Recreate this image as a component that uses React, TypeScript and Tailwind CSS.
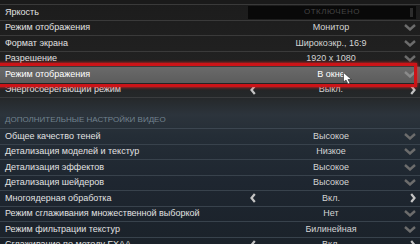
import React from "react";

type Ctrl = "down" | "lr" | "none";
type RowT = { label: string; value: string; ctrl: Ctrl };

const top: RowT[] = [
  { label: "Режим отображения", value: "Монитор", ctrl: "down" },
  { label: "Формат экрана", value: "Широкоэкр., 16:9", ctrl: "down" },
  { label: "Разрешение", value: "1920 x 1080", ctrl: "down" },
];

const bottom: RowT[] = [
  { label: "Общее качество теней", value: "Высокое", ctrl: "down" },
  { label: "Детализация моделей и текстур", value: "Низкое", ctrl: "down" },
  { label: "Детализация эффектов", value: "Высокое", ctrl: "down" },
  { label: "Детализация шейдеров", value: "Высокое", ctrl: "down" },
  { label: "Многоядерная обработка", value: "Вкл.", ctrl: "lr" },
  { label: "Режим сглаживания множественной выборкой", value: "Нет", ctrl: "down" },
  { label: "Режим фильтрации текстур", value: "Билинейная", ctrl: "down" },
  { label: "Сглаживание по методу FXAA", value: "Вкл.", ctrl: "lr" },
];

const font = { fontFamily: '"Liberation Sans", Arial, sans-serif' };

function Down({ color = "#6c6c6c" }: { color?: string }) {
  return (
    <svg width="12" height="7" viewBox="0 0 12 7">
      <polyline points="1,1 6,5.5 11,1" fill="none" stroke={color} strokeWidth="2.4" />
    </svg>
  );
}

function Left() {
  return (
    <svg width="6" height="10" viewBox="0 0 6 10">
      <polyline points="4.8,1 1.5,5 4.8,9" fill="none" stroke="#c4c4c4" strokeWidth="2.2" />
    </svg>
  );
}

function Right() {
  return (
    <svg width="6" height="10" viewBox="0 0 6 10">
      <polyline points="1.2,1 4.5,5 1.2,9" fill="none" stroke="#c4c4c4" strokeWidth="2.2" />
    </svg>
  );
}

function Value({ value, ctrl, chevColor }: { value: string; ctrl: Ctrl; chevColor?: string }) {
  return (
    <div className="w-[170px] h-full grid grid-cols-[12px_1fr_12px] items-center">
      <div className="flex items-center justify-start pl-[4px]">{ctrl === "lr" ? <Left /> : null}</div>
      <div className="text-center text-[9px] text-[#d4d4d4] whitespace-nowrap leading-none">{value}</div>
      <div className="flex items-center justify-end">
        {ctrl === "down" ? <Down color={chevColor} /> : ctrl === "lr" ? <Right /> : null}
      </div>
    </div>
  );
}

function Row({ r, line }: { r: RowT; line: string }) {
  return (
    <div className={`flex h-[15.5px] items-center border-b ${line} pr-[4px]`}>
      <div className="flex-1 pl-[5px] text-[9px] text-[#e2e2e2] whitespace-nowrap leading-none">{r.label}</div>
      <Value value={r.value} ctrl={r.ctrl} />
    </div>
  );
}

export default function App() {
  return (
    <div
      className="relative w-[420px] h-[244px] overflow-hidden bg-[linear-gradient(to_bottom,#1c1c1c_0%,#222222_30%,#25282a_40%,#2c343c_47%,#242d36_56%,#1e2630_75%,#1b222a_100%)]"
      style={font}
    >
      <div className="h-[5px] border-b border-[#3a3a3a] bg-[#1a1a1a]" />
      {/* Яркость */}
      <div className="flex h-[15.5px] items-center border-b border-[#3a3a3a] pr-[4px]">
        <div className="flex-1 pl-[5px] text-[9px] text-[#e2e2e2] leading-none">Яркость</div>
        <div className="w-[168px] h-[13px] ml-[2px] bg-[#090909] flex items-center justify-center relative">
          <span className="text-[8px] tracking-[0.5px] text-[#444] leading-none">ОТКЛЮЧЕНО</span>
          <div className="absolute right-[3px] top-[2px] w-[3px] h-[9px] bg-[#2c2c2c]" />
        </div>
      </div>
      {top.map((r) => (
        <Row key={r.label} r={r} line="border-[#3a3a3a]" />
      ))}
      {/* highlighted */}
      <div className="relative flex h-[15.5px] items-center pr-[4px] bg-[linear-gradient(to_bottom,#6a6a6a,#5c5c5c)]">
        <div className="flex-1 pl-[5px] text-[9px] text-white whitespace-nowrap leading-none">Режим отображения</div>
        <div className="w-[170px] h-full grid grid-cols-[12px_1fr_12px] items-center">
          <div />
          <div className="text-center text-[9px] text-white leading-none">В окне</div>
          <div className="flex items-center justify-end">
            <Down color="#8a8a8a" />
          </div>
        </div>
        <div className="absolute top-[-4px] bottom-[-4px] left-[-4px] right-[3px] border-[3.5px] border-[#cc1418] shadow-[0_0_3px_#ff2020]" />
        <svg className="absolute left-[343px] top-[5px]" width="11" height="13" viewBox="0 0 11 13">
          <polygon points="0.5,0.5 0.5,10 3,8 5,12 7,11 5,7.5 8.5,7.5" fill="#ffffff" stroke="#222" strokeWidth="0.6" />
        </svg>
      </div>
      <div className="flex h-[15.5px] items-center border-b border-[#3a3c3e] pr-[4px]">
        <div className="flex-1 pl-[5px] text-[9px] text-[#e2e2e2] whitespace-nowrap leading-none">Энергосберегающий режим</div>
        <Value value="Выкл." ctrl="lr" />
      </div>
      {/* section header */}
      <div className="h-[31px] flex items-end pb-[4px] pl-[5px] border-b border-[#3c4650]">
        <span className="text-[8px] text-[#72828f] leading-none whitespace-nowrap">
          ДОПОЛНИТЕЛЬНЫЕ НАСТРОЙКИ ВИДЕО
        </span>
      </div>
      {bottom.map((r) => (
        <Row key={r.label} r={r} line="border-[#38424c]" />
      ))}
    </div>
  );
}
